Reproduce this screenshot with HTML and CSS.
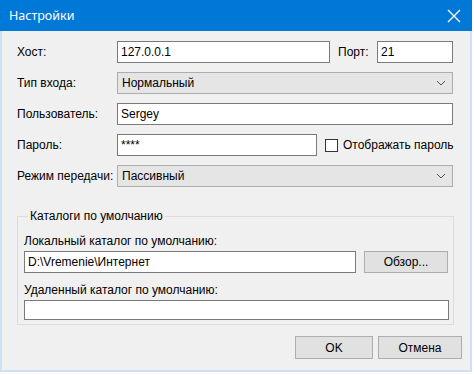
FILE: index.html
```html
<!DOCTYPE html>
<html lang="ru">
<head>
    <meta charset="UTF-8">
    <title>Настройки</title>
    <link rel="stylesheet" href="styles.css">
</head>
<body>
    <div class="window">
        <div class="titlebar">
            <span class="title">Настройки</span>
            <svg class="close" width="14" height="14" viewBox="0 0 14 14">
                <path d="M1 1 L13 13 M13 1 L1 13" stroke="#fff" stroke-width="1.4" fill="none"/>
            </svg>
        </div>

        <div class="content">
            <div class="form">
                <div class="row">
                    <label class="label">Хост:</label>
                    <div class="field host">127.0.0.1</div>
                    <label class="port-label">Порт:</label>
                    <div class="field port">21</div>
                </div>
                <div class="row">
                    <label class="label">Тип входа:</label>
                    <div class="select">
                        <span>Нормальный</span>
                        <svg class="chevron" width="10" height="6" viewBox="0 0 10 6">
                            <path d="M1 1 L5 5 L9 1" stroke="#555" stroke-width="1" fill="none"/>
                        </svg>
                    </div>
                </div>
                <div class="row">
                    <label class="label">Пользователь:</label>
                    <div class="field wide">Sergey</div>
                </div>
                <div class="row">
                    <label class="label">Пароль:</label>
                    <div class="field pass">****</div>
                    <span class="checkbox"></span>
                    <span class="check-label">Отображать пароль</span>
                </div>
                <div class="row">
                    <label class="label">Режим передачи:</label>
                    <div class="select">
                        <span>Пассивный</span>
                        <svg class="chevron" width="10" height="6" viewBox="0 0 10 6">
                            <path d="M1 1 L5 5 L9 1" stroke="#555" stroke-width="1" fill="none"/>
                        </svg>
                    </div>
                </div>
            </div>

            <fieldset class="group">
                <legend>Каталоги по умолчанию</legend>
                <div class="sub-label">Локальный каталог по умолчанию:</div>
                <div class="browse-row">
                    <div class="field path">D:\Vremenie\Интернет</div>
                    <button class="button browse">Обзор...</button>
                </div>
                <div class="sub-label second">Удаленный каталог по умолчанию:</div>
                <div class="field remote"></div>
            </fieldset>

            <div class="button-group">
                <button class="button ok">OK</button>
                <button class="button cancel">Отмена</button>
            </div>
        </div>
    </div>
</body>
</html>
```

FILE: styles.css
```css
* {
    box-sizing: border-box;
    margin: 0;
    padding: 0;
}
body {
    width: 474px;
    height: 375px;
    background-color: #ffffff;
    font-family: 'Liberation Sans', Arial, sans-serif;
    font-size: 12px;
    color: #000;
    overflow: hidden;
}
.window {
    width: 472px;
    height: 372px;
    background-color: #f0f0f0;
    border: 2px solid #cfe2f4;
    border-top: none;
}
.titlebar {
    height: 31px;
    margin: 0 -2px;
    background-color: #0078d7;
    display: flex;
    align-items: center;
    justify-content: space-between;
    padding: 0 11px 0 9px;
}
.title {
    font-family: 'Noto Sans', 'Open Sans', sans-serif;
    font-size: 12.5px;
    color: #fff;
}
.close {
    display: block;
}
.content {
    padding: 10px 0 0 15px;
}
.form {
    display: flex;
    flex-direction: column;
    gap: 9px;
    width: 436px;
}
.row {
    display: flex;
    align-items: center;
    height: 22px;
    white-space: nowrap;
}
.label {
    width: 100px;
    flex: none;
}
.field {
    height: 22px;
    background-color: #fff;
    border: 1px solid #7a7a7a;
    padding: 0 3px;
    line-height: 20px;
    white-space: nowrap;
    flex: none;
}
.host {
    width: 213px;
}
.port-label {
    margin-left: 8px;
    width: 39px;
    flex: none;
}
.port {
    width: 76px;
}
.wide {
    flex: 1;
}
.pass {
    width: 200px;
}
.checkbox {
    flex: none;
    width: 13px;
    height: 13px;
    margin-left: 8px;
    border: 1px solid #333;
    background-color: #fff;
}
.check-label {
    margin-left: 5px;
    flex: none;
}
.select {
    flex: 1;
    height: 22px;
    display: flex;
    align-items: center;
    justify-content: space-between;
    padding: 0 6px 0 4px;
    background-color: #e5e5e5;
    border: 1px solid #adadad;
}
.group {
    width: 437px;
    height: 116px;
    margin-top: 22px;
    border: 1px solid #dcdcdc;
    padding: 2px 4px 0 6px;
}
.group legend {
    margin-left: 4px;
    padding: 0 2px;
}
.sub-label {
    margin-top: 9px;
    height: 14px;
}
.sub-label.second {
    margin-top: 10px;
}
.browse-row {
    display: flex;
    gap: 8px;
    margin-top: 3px;
}
.path {
    width: 332px;
}
.remote {
    width: 425px;
    height: 20px;
    margin-top: 3px;
}
.button {
    font-family: 'Liberation Sans', Arial, sans-serif;
    font-size: 12px;
    height: 22px;
    background-color: #e1e1e1;
    border: 1px solid #adadad;
    color: #000;
}
.browse {
    width: 84px;
}
.button-group {
    display: flex;
    justify-content: flex-end;
    gap: 5px;
    width: 445px;
    margin-top: 11px;
}
.button-group .button {
    height: 23px;
}
.ok {
    width: 78px;
}
.cancel {
    width: 84px;
}
```
